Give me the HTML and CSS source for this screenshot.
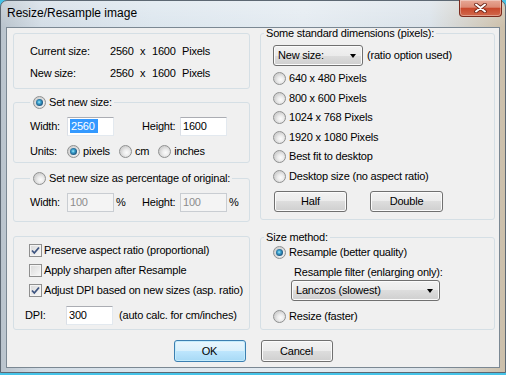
FILE: index.html
```html
<!DOCTYPE html>
<html lang="en">
<head>
    <meta charset="UTF-8">
    <title>Resize/Resample image</title>
    <link rel="stylesheet" href="styles.css">
</head>
<body>
    <div class="window">
        <div class="titlebar">Resize/Resample image</div>
        <div class="close">
            <svg width="13" height="10" viewBox="0 0 13 10">
                <path d="M2 1.5 L11 8.5 M11 1.5 L2 8.5" stroke="#6b2417" stroke-width="3.6" stroke-linecap="round"/>
                <path d="M2 1.5 L11 8.5 M11 1.5 L2 8.5" stroke="#fff" stroke-width="2" stroke-linecap="round"/>
            </svg>
        </div>

        <div class="client">
            <div class="columns">
                <div class="col-left">
                    <div class="panel info">
                        <div class="info-row">
                            <span class="info-label">Current size:</span>
                            <span class="num">2560</span><span class="times">x</span><span class="num">1600</span><span>Pixels</span>
                        </div>
                        <div class="info-row">
                            <span class="info-label">New size:</span>
                            <span class="num">2560</span><span class="times">x</span><span class="num">1600</span><span>Pixels</span>
                        </div>
                    </div>

                    <fieldset class="group">
                        <legend class="radio-legend"><span class="radio on"></span>Set new size:</legend>
                        <div class="body size-body">
                            <div class="dims">
                                <span>Width:</span>
                                <div class="field"><span class="sel">2560</span></div>
                                <span></span>
                                <span>Height:</span>
                                <div class="field">1600</div>
                            </div>
                            <div class="units">
                                <span class="units-label">Units:</span>
                                <span class="opt"><span class="radio on"></span>pixels</span>
                                <span class="opt"><span class="radio"></span>cm</span>
                                <span class="opt"><span class="radio"></span>inches</span>
                            </div>
                        </div>
                    </fieldset>

                    <fieldset class="group pct-group">
                        <legend class="radio-legend"><span class="radio"></span>Set new size as percentage of original:</legend>
                        <div class="body pct-body">
                            <div class="dims">
                                <span>Width:</span>
                                <div class="field disabled">100</div>
                                <span class="pct">%</span>
                                <span>Height:</span>
                                <div class="field disabled">100</div>
                                <span class="pct">%</span>
                            </div>
                        </div>
                    </fieldset>

                    <div class="panel options">
                        <div class="check-row">
                            <span class="check on"><svg width="11" height="11" viewBox="0 0 11 11"><path d="M2 5.5 L4.3 8 L9 2.5" fill="none" stroke="#3d5480" stroke-width="1.8"/></svg></span>
                            Preserve aspect ratio (proportional)
                        </div>
                        <div class="check-row">
                            <span class="check"></span>
                            Apply sharpen after Resample
                        </div>
                        <div class="check-row">
                            <span class="check on"><svg width="11" height="11" viewBox="0 0 11 11"><path d="M2 5.5 L4.3 8 L9 2.5" fill="none" stroke="#3d5480" stroke-width="1.8"/></svg></span>
                            Adjust DPI based on new sizes (asp. ratio)
                        </div>
                        <div class="dpi-row">
                            <span>DPI:</span>
                            <div class="field">300</div>
                            <span class="dpi-note">(auto calc. for cm/inches)</span>
                        </div>
                    </div>
                </div>

                <div class="col-right">
                    <fieldset class="group">
                        <legend class="text-legend">Some standard dimensions (pixels):</legend>
                        <div class="body std-body">
                            <div class="combo-row">
                                <div class="combo size-combo">New size:<span class="arrow"></span></div>
                                <span>(ratio option used)</span>
                            </div>
                            <div class="radio-list">
                                <div class="radio-row"><span class="radio"></span>640 x 480 Pixels</div>
                                <div class="radio-row"><span class="radio"></span>800 x 600 Pixels</div>
                                <div class="radio-row"><span class="radio"></span>1024 x 768 Pixels</div>
                                <div class="radio-row"><span class="radio"></span>1920 x 1080 Pixels</div>
                                <div class="radio-row"><span class="radio"></span>Best fit to desktop</div>
                                <div class="radio-row"><span class="radio"></span>Desktop size (no aspect ratio)</div>
                            </div>
                            <div class="pair">
                                <button class="btn">Half</button>
                                <button class="btn">Double</button>
                            </div>
                        </div>
                    </fieldset>

                    <fieldset class="group method-group">
                        <legend class="text-legend">Size method:</legend>
                        <div class="body method-body">
                            <div class="radio-row method-row"><span class="radio on"></span>Resample (better quality)</div>
                            <div class="filter-label">Resample filter (enlarging only):</div>
                            <div class="combo filter-combo">Lanczos (slowest)<span class="arrow"></span></div>
                            <div class="radio-row method-row resize-row"><span class="radio"></span>Resize (faster)</div>
                        </div>
                    </fieldset>
                </div>
            </div>

            <div class="actions">
                <button class="btn default">OK</button>
                <button class="btn">Cancel</button>
            </div>
        </div>
    </div>
</body>
</html>
```

FILE: styles.css
```css
* {
    box-sizing: border-box;
}
body {
    margin: 0;
    width: 506px;
    height: 375px;
    overflow: hidden;
    background: #45c3e8;
    font: 11px/13px "Liberation Sans", Arial, sans-serif;
    color: #000;
}

/* window frame */
.window {
    position: relative;
    display: flex;
    flex-direction: column;
    width: 506px;
    height: 373px;
    padding: 0 5px 4px;
    border: 1px solid #5d6873;
    border-radius: 7px 7px 0 0;
    background:
        linear-gradient(to bottom, rgba(255,255,255,0.25), rgba(255,255,255,0) 26px),
        linear-gradient(to right, #b9c3cc 0, #d3dde6 8%, #dce6ee 30%, #e4ebf1 60%, #dbe3ea 85%, #ccbfa9 100%);
}
.titlebar {
    height: 26px;
    line-height: 24px;
    padding-left: 1px;
    font-size: 12px;
}
.close {
    position: absolute;
    top: -1px;
    right: 3px;
    width: 43px;
    height: 17px;
    display: flex;
    align-items: center;
    justify-content: center;
    border: 1px solid #7c2a1c;
    border-top: none;
    border-radius: 0 0 4px 4px;
    background: linear-gradient(#e7a896 0, #dc8a74 45%, #c8482c 52%, #d1694c 100%);
    box-shadow: inset 0 0 0 1px rgba(255,255,255,0.35);
}
.client {
    flex: 1;
    background: #f0f0f0;
    border: 1px solid #7b8893;
    letter-spacing: -0.2px;
    white-space: nowrap;
}

/* layout */
.columns {
    display: grid;
    grid-template-columns: 237px 235px;
    column-gap: 10px;
    align-items: start;
    padding-left: 6px;
}
.col-left {
    margin-top: 5px;
}
.panel {
    border: 1px solid #d5dfe5;
    border-radius: 3px;
}
.group {
    margin: 0;
    padding: 0;
    min-width: 0;
    border: 1px solid #d5dfe5;
    border-radius: 3px;
}
.radio-legend {
    display: flex;
    align-items: center;
    gap: 3px;
    height: 13px;
    margin-left: 16px;
    padding: 0 2px 0 3px;
}
.text-legend {
    height: 11px;
    line-height: 11px;
    margin-left: 3px;
    padding: 0 2px;
}

/* left side */
.info {
    height: 56px;
    padding: 11px 0 0 16px;
}
.info-row {
    display: flex;
    height: 13px;
    margin-bottom: 9px;
}
.info-label {
    width: 80px;
}
.num {
    width: 30px;
}
.times {
    width: 12px;
}
.group + .group,
.panel + .group {
    margin-top: 7px;
}
.pct-group {
    margin-top: 9px !important;
}
.size-body {
    padding: 8px 0 4px 16px;
}
.pct-body {
    padding: 8px 0 9px 16px;
}
.dims {
    display: grid;
    grid-template-columns: 37px 47px 28px 38px 47px auto;
    align-items: center;
    height: 19px;
}
.pct {
    padding-left: 2px;
}
.units {
    display: flex;
    align-items: center;
    height: 13px;
    margin-top: 9px;
}
.units-label {
    width: 37px;
}
.opt {
    display: flex;
    align-items: center;
    gap: 3px;
    margin-right: 9px;
}
.options {
    margin-top: 14px;
    padding: 3px 0 4px 11px;
}
.check-row {
    display: flex;
    align-items: center;
    gap: 2px;
    height: 20px;
    padding-left: 4px;
}
.dpi-row {
    display: grid;
    grid-template-columns: 41px 47px auto;
    align-items: center;
    height: 19px;
    margin-top: 6px;
}
.dpi-note {
    margin-left: 6px;
}

/* right side */
.std-body {
    padding: 6px 0 7px 12px;
}
.combo-row {
    display: flex;
    align-items: center;
    gap: 4px;
}
.radio-list {
    margin-top: 3px;
}
.radio-row {
    display: flex;
    align-items: center;
    gap: 3px;
    height: 19.5px;
}
.pair {
    display: flex;
    gap: 23px;
    margin-top: 5px;
    padding-left: 1px;
}
.pair .btn {
    width: 73px;
    height: 21px;
}
.method-group {
    margin-top: 12px !important;
}
.method-body {
    padding: 0 0 3px 12px;
}
.method-row {
    height: 19px;
}
.filter-label {
    margin-top: 4px;
    padding-left: 21px;
}
.filter-combo {
    width: 149px;
    margin: 1px 0 0 18px;
    padding-left: 5px;
}
.resize-row {
    margin-top: 6px;
}

/* controls */
.radio {
    position: relative;
    flex: none;
    width: 13px;
    height: 13px;
    border: 1px solid #8f9090;
    border-radius: 50%;
    background: radial-gradient(circle at 60% 60%, #fbfbfb 0, #ececec 3px, #d3d3d3 6px);
}
.radio.on::after {
    content: "";
    position: absolute;
    left: 2px;
    top: 2px;
    width: 7px;
    height: 7px;
    border-radius: 50%;
    background: radial-gradient(circle at 45% 45%, #a8ecfb 0, #3fa6d2 1.5px, #1e5b86 3.5px);
}
.check {
    display: flex;
    align-items: center;
    justify-content: center;
    flex: none;
    width: 13px;
    height: 13px;
    border: 1px solid #8f8f8f;
    background: linear-gradient(135deg, #d9d9d9, #f9f9f9);
    box-shadow: inset 0 0 0 1px #f4f4f4;
}
.field {
    height: 19px;
    padding: 1px 0 0 2px;
    line-height: 15px;
    background: #fff;
    border: 1px solid #e3e9ef;
    border-top-color: #abadb3;
    border-left-color: #dbdfe6;
}
.field.disabled {
    color: #8c8c8c;
    background: #f4f4f4;
    border-color: #c9cdd2;
}
.sel {
    display: inline-block;
    padding: 0 3px 0 1px;
    background: #3399ff;
    color: #fff;
    line-height: 14px;
}
.btn,
.combo {
    font: inherit;
    letter-spacing: inherit;
    color: #000;
    border: 1px solid #707070;
    border-radius: 3px;
    background: linear-gradient(#f2f2f2 0, #ebebeb 50%, #dddddd 50%, #cfcfcf 100%);
    box-shadow: inset 0 0 0 1px #fbfbfb;
}
.btn {
    width: 72px;
    height: 22px;
    padding: 0;
}
.btn.default {
    border-color: #3c7fb1;
    background: linear-gradient(#eaf6fd 0, #d9f0fc 50%, #bee6fd 50%, #a7d9f5 100%);
    box-shadow: inset 0 0 0 1px #c5ecfc;
}
.combo {
    display: flex;
    align-items: center;
    height: 21px;
    padding: 0 6px 0 4px;
}
.size-combo {
    width: 90px;
}
.arrow {
    margin-left: auto;
    width: 0;
    height: 0;
    border-left: 3.5px solid transparent;
    border-right: 3.5px solid transparent;
    border-top: 4px solid #000;
}
.actions {
    display: flex;
    justify-content: center;
    gap: 15px;
    margin-top: 10px;
}
```
